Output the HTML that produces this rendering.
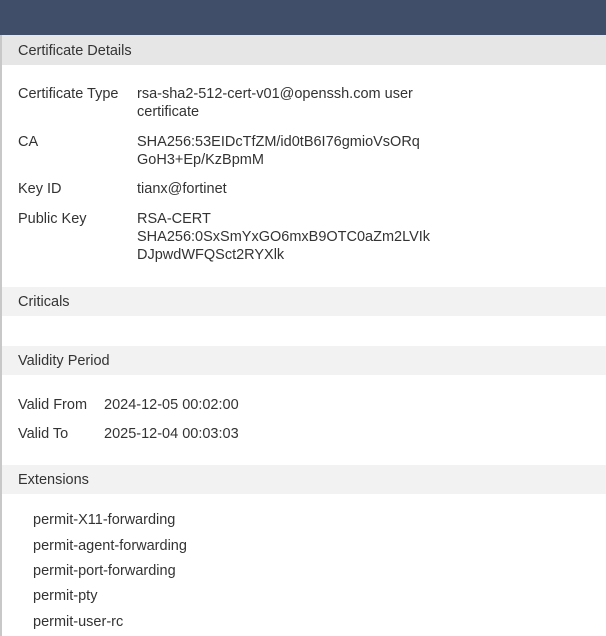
<!DOCTYPE html>
<html><head><meta charset="utf-8"><style>
body{margin:0;width:606px;height:636px;overflow:hidden;background:#fff;font-family:"Liberation Sans",sans-serif;font-size:14.5px;color:#333;position:relative}
.bar{position:absolute;left:0;top:0;width:606px;height:35px;background:#404e69}
.lb{position:absolute;left:0;top:35px;width:2px;height:601px;background:#c8c8c8}
.h{position:absolute;left:2px;width:604px;height:29px;line-height:31px;padding-left:16px;box-sizing:border-box;background:#f2f2f2;font-size:14.5px}
.t{position:absolute;line-height:18px;white-space:nowrap}
</style></head><body>
<div class="bar"></div><div class="lb"></div>
<div class="h" style="top:35px;height:30px;line-height:32px;background:#e6e6e6">Certificate Details</div>
<div class="t" style="left:18px;top:85px">Certificate Type</div>
<div class="t" style="left:137px;top:85px">rsa-sha2-512-cert-v01@openssh.com user<br>certificate</div>
<div class="t" style="left:18px;top:133px">CA</div>
<div class="t" style="left:137px;top:133px">SHA256:53EIDcTfZM/id0tB6I76gmioVsORq<br>GoH3+Ep/KzBpmM</div>
<div class="t" style="left:18px;top:180px">Key ID</div>
<div class="t" style="left:137px;top:180px">tianx@fortinet</div>
<div class="t" style="left:18px;top:210px">Public Key</div>
<div class="t" style="left:137px;top:210px">RSA-CERT<br>SHA256:0SxSmYxGO6mxB9OTC0aZm2LVIk<br>DJpwdWFQSct2RYXlk</div>
<div class="h" style="top:287px">Criticals</div>
<div class="h" style="top:346px">Validity Period</div>
<div class="t" style="left:18px;top:396px">Valid From</div>
<div class="t" style="left:104px;top:396px">2024-12-05 00:02:00</div>
<div class="t" style="left:18px;top:425px">Valid To</div>
<div class="t" style="left:104px;top:425px">2025-12-04 00:03:03</div>
<div class="h" style="top:465px">Extensions</div>
<div class="t" style="left:33px;top:511px">permit-X11-forwarding</div>
<div class="t" style="left:33px;top:537px">permit-agent-forwarding</div>
<div class="t" style="left:33px;top:562px">permit-port-forwarding</div>
<div class="t" style="left:33px;top:587px">permit-pty</div>
<div class="t" style="left:33px;top:613px">permit-user-rc</div>
</body></html>
